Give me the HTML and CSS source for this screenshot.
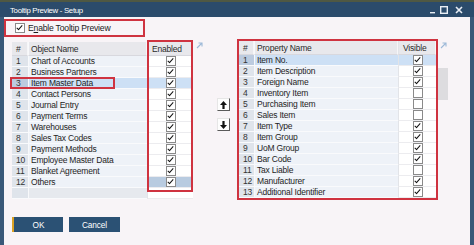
FILE: index.html
```html
<!DOCTYPE html>
<html>
<head>
<meta charset="utf-8">
<link rel="stylesheet" href="styles.css">
</head>
<body>
<div class="window">
  <div class="titlebar">
    <span class="title">Tooltip Preview - Setup</span>
    <div class="controls">
      <svg class="ctl" width="8" height="8" viewBox="0 0 8 8"><rect x="1" y="6" width="5" height="1.4" fill="#e9eef4"/></svg>
      <svg class="ctl" width="8" height="8" viewBox="0 0 8 8"><rect x="0.7" y="0.7" width="6.6" height="6.6" fill="none" stroke="#e9eef4" stroke-width="1.4"/></svg>
      <svg class="ctl" width="8" height="8" viewBox="0 0 8 8"><path d="M1 1 L7 7 M7 1 L1 7" stroke="#e9eef4" stroke-width="1.6"/></svg>
    </div>
  </div>
  <div class="body">
    <label class="enable"><span class="cb on"></span><span>E<u>n</u>able Tooltip Preview</span></label>
    <div class="main">
      <div class="left-wrap">
        <div class="tbl left">
          <div class="row head"><span class="c-num">#</span><span class="c-name">Object Name</span><span class="c-chk">Enabled</span></div>
          <div class="row"><span class="c-num">1</span><span class="c-name">Chart of Accounts</span><span class="c-chk"><span class="cb on"></span></span></div>
          <div class="row"><span class="c-num">2</span><span class="c-name">Business Partners</span><span class="c-chk"><span class="cb on"></span></span></div>
          <div class="row sel"><span class="c-num">3</span><span class="c-name">Item Master Data</span><span class="c-chk"><span class="cb on"></span></span></div>
          <div class="row"><span class="c-num">4</span><span class="c-name">Contact Persons</span><span class="c-chk"><span class="cb on"></span></span></div>
          <div class="row"><span class="c-num">5</span><span class="c-name">Journal Entry</span><span class="c-chk"><span class="cb on"></span></span></div>
          <div class="row"><span class="c-num">6</span><span class="c-name">Payment Terms</span><span class="c-chk"><span class="cb on"></span></span></div>
          <div class="row"><span class="c-num">7</span><span class="c-name">Warehouses</span><span class="c-chk"><span class="cb on"></span></span></div>
          <div class="row"><span class="c-num">8</span><span class="c-name">Sales Tax Codes</span><span class="c-chk"><span class="cb on"></span></span></div>
          <div class="row"><span class="c-num">9</span><span class="c-name">Payment Methods</span><span class="c-chk"><span class="cb on"></span></span></div>
          <div class="row"><span class="c-num">10</span><span class="c-name">Employee Master Data</span><span class="c-chk"><span class="cb on"></span></span></div>
          <div class="row"><span class="c-num">11</span><span class="c-name">Blanket Agreement</span><span class="c-chk"><span class="cb on"></span></span></div>
          <div class="row"><span class="c-num">12</span><span class="c-name">Others</span><span class="c-chk cell-sel"><span class="cb on"></span></span></div>
          <div class="row empty"><span class="c-num"></span><span class="c-name"></span><span class="c-chk"></span></div>
        </div>
        <div class="mark mark-col"></div>
        <div class="mark mark-row"></div>
      </div>
      <div class="mid">
        <svg class="expand" width="7" height="7" viewBox="0 0 7 7"><path d="M1 6 L5.5 1.5 M2.5 1 H6 V4.5" fill="none" stroke="#9db9d8" stroke-width="1.1"/></svg>
        <div class="movers">
          <span class="mv"><svg width="7" height="8" viewBox="0 0 7 8"><path d="M3.5 0 L7 4 H4.6 V8 H2.4 V4 H0 Z" fill="#111"/></svg></span>
          <span class="mv"><svg width="7" height="8" viewBox="0 0 7 8"><path d="M3.5 8 L7 4 H4.6 V0 H2.4 V4 H0 Z" fill="#111"/></svg></span>
        </div>
      </div>
      <div class="right-wrap">
        <div class="tbl right">
          <div class="row head"><span class="c-num">#</span><span class="c-name">Property Name</span><span class="c-chk">Visible</span></div>
          <div class="row sel"><span class="c-num">1</span><span class="c-name">Item No.</span><span class="c-chk"><span class="cb on"></span></span></div>
          <div class="row"><span class="c-num">2</span><span class="c-name">Item Description</span><span class="c-chk"><span class="cb on"></span></span></div>
          <div class="row"><span class="c-num">3</span><span class="c-name">Foreign Name</span><span class="c-chk"><span class="cb on"></span></span></div>
          <div class="row"><span class="c-num">4</span><span class="c-name">Inventory Item</span><span class="c-chk"><span class="cb"></span></span></div>
          <div class="row"><span class="c-num">5</span><span class="c-name">Purchasing Item</span><span class="c-chk"><span class="cb"></span></span></div>
          <div class="row"><span class="c-num">6</span><span class="c-name">Sales Item</span><span class="c-chk"><span class="cb"></span></span></div>
          <div class="row"><span class="c-num">7</span><span class="c-name">Item Type</span><span class="c-chk"><span class="cb on"></span></span></div>
          <div class="row"><span class="c-num">8</span><span class="c-name">Item Group</span><span class="c-chk"><span class="cb on"></span></span></div>
          <div class="row"><span class="c-num">9</span><span class="c-name">UoM Group</span><span class="c-chk"><span class="cb on"></span></span></div>
          <div class="row"><span class="c-num">10</span><span class="c-name">Bar Code</span><span class="c-chk"><span class="cb on"></span></span></div>
          <div class="row"><span class="c-num">11</span><span class="c-name">Tax Liable</span><span class="c-chk"><span class="cb"></span></span></div>
          <div class="row"><span class="c-num">12</span><span class="c-name">Manufacturer</span><span class="c-chk"><span class="cb on"></span></span></div>
          <div class="row"><span class="c-num">13</span><span class="c-name">Additional Identifier</span><span class="c-chk"><span class="cb on"></span></span></div>
        </div>
      </div>
      <div class="side">
        <svg class="expand" width="7" height="7" viewBox="0 0 7 7"><path d="M1 6 L5.5 1.5 M2.5 1 H6 V4.5" fill="none" stroke="#9db9d8" stroke-width="1.1"/></svg>
        <div class="scroll"></div>
      </div>
    </div>
    <div class="actions">
      <span class="btn ok">OK</span>
      <span class="btn">Cancel</span>
    </div>
  </div>
</div>
</body>
</html>
```

FILE: styles.css
```css
html, body {
  margin: 0;
  padding: 0;
}
body {
  width: 474px;
  height: 245px;
  overflow: hidden;
  background: #3a5878;
  font-family: "Liberation Sans", Arial, sans-serif;
  font-size: 8.5px;
  letter-spacing: -0.2px;
  color: #1e1e1e;
}
.window {
  display: flex;
  flex-direction: column;
  height: 245px;
}
.titlebar {
  height: 15px;
  border-top: 2px solid #4f5843;
  background: #2b4b6b;
  display: flex;
  align-items: center;
  padding: 0 10px 0 10px;
  color: #fff;
}
.title {
  font-size: 7.8px;
  letter-spacing: -0.3px;
  padding-top: 1px;
}
.controls {
  margin-left: auto;
  display: flex;
  align-items: center;
  gap: 3px;
  padding-right: 1px;
}
.ctl {
  display: block;
  width: 8px;
  height: 8px;
}
.controls .ctl:nth-child(3) {
  margin-left: 4px;
}
.body {
  flex: 1;
  margin: 0 4px;
  background: #f8f4f7;
  display: flex;
  flex-direction: column;
}
.enable {
  margin-top: 2px;
  width: 141px;
  height: 18px;
  box-sizing: border-box;
  border: 2px solid #cf3340;
  display: flex;
  align-items: center;
  gap: 3px;
  padding-left: 9px;
  font-size: 8.6px;
  color: #1b1b1b;
}
.enable u {
  text-decoration-thickness: 1px;
  text-underline-offset: 1px;
}
.cb {
  position: relative;
  display: block;
  width: 8px;
  height: 8px;
  border: 1px solid #8a8a8a;
  background: #fff;
  flex: none;
}
.cb.on::after {
  content: "";
  position: absolute;
  left: 2.3px;
  top: -0.2px;
  width: 2px;
  height: 5px;
  border: solid #111;
  border-width: 0 1.7px 1.7px 0;
  transform: rotate(42deg);
}
.main {
  display: flex;
  align-items: flex-start;
  margin-top: 2px;
  padding-left: 8px;
}
.left-wrap {
  position: relative;
  width: 181px;
  margin-top: 3px;
}
.tbl {
  display: flex;
  flex-direction: column;
}
.row {
  display: flex;
  height: 11px;
}
.row > span {
  display: flex;
  align-items: center;
  box-sizing: border-box;
  border-bottom: 1px solid #f9fafc;
  white-space: nowrap;
  overflow: hidden;
}
.row.head {
  height: 14px;
}
.row.head > span {
  background: #e8e8ec;
  border-bottom: 1px solid #d8d8de;
  border-right: 1px solid #f6f6f8;
  color: #2a2a2a;
}
.c-num {
  background: #dfe4eb;
  padding-left: 4px;
  color: #333;
}
.c-name {
  background: #eef2f8;
  padding-left: 2px;
  border-left: 1px solid #f8f9fb;
}
.c-chk {
  background: #fff;
  justify-content: center;
  border-left: 1px solid #e2e4e8;
}
.row:not(.head) > .c-chk {
  border-bottom: 1px solid #ececef;
}
.row.head > .c-chk {
  justify-content: flex-start;
  padding-left: 4px;
}
.left .c-num { width: 16px; }
.left .c-name { width: 119px; }
.left .c-chk { width: 46px; }
.right .c-num { width: 15px; }
.right .c-name { width: 144px; }
.right .c-chk { width: 38px; }
.row.sel > .c-name,
.row.sel > .c-chk {
  background: #cde0f5;
}
.row.sel > .c-num {
  background: #bccbdf;
}
.row > .c-chk.cell-sel {
  background: #b8cbe0;
}
.row.empty > .c-name {
  background: #e6e9ee;
}
.mark {
  position: absolute;
  box-sizing: border-box;
  border: 2px solid #cf3340;
  pointer-events: none;
}
.mark-col {
  left: 135px;
  top: -2px;
  width: 46px;
  height: 152px;
}
.mark-row {
  left: -2px;
  top: 35px;
  width: 105px;
  height: 12px;
}
.mid {
  width: 44px;
  display: flex;
  flex-direction: column;
}
.expand {
  display: block;
  margin-top: 3px;
  margin-left: 3px;
}
.movers {
  display: flex;
  flex-direction: column;
  gap: 7px;
  margin-top: 49px;
  margin-left: 24px;
}
.mv {
  width: 13px;
  height: 13px;
  box-sizing: border-box;
  background: #fdfdfd;
  border: 1px solid #e6e6e6;
  border-right-color: #5a5a5a;
  border-bottom-color: #5a5a5a;
  display: flex;
  align-items: center;
  justify-content: center;
}
.mv svg {
  display: block;
}
.right-wrap {
  width: 201px;
  box-sizing: border-box;
  border: 2px solid #cf3340;
  background: #fff;
}
.side {
  width: 12px;
  display: flex;
  flex-direction: column;
}
.side .expand {
  margin-left: 2px;
}
.scroll {
  margin-top: 19px;
  width: 10px;
  height: 32px;
  background: #dddcdf;
}
.actions {
  display: flex;
  gap: 6px;
  margin-top: 17px;
  padding-left: 8px;
}
.btn {
  width: 51px;
  height: 15px;
  box-sizing: border-box;
  background: #2b5174;
  color: #fff;
  display: flex;
  align-items: center;
  justify-content: center;
  font-size: 8.3px;
  letter-spacing: -0.1px;
}
.btn.ok {
  border-left: 2px solid #dba225;
}
```
